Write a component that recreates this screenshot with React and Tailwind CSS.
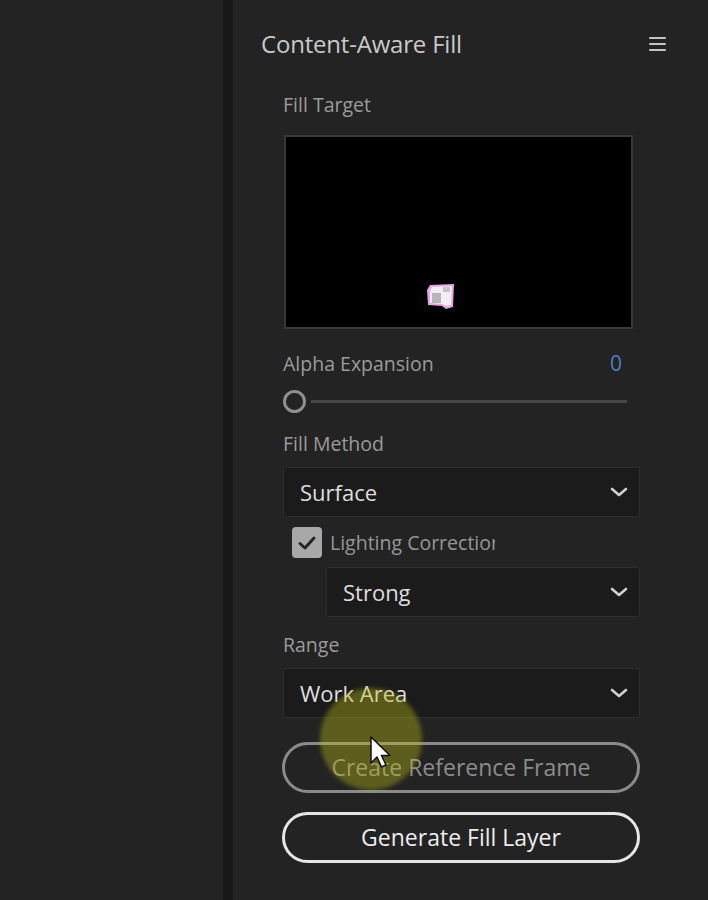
import React from "react";

const font = { fontFamily: '"Open Sans", "Noto Sans", sans-serif' };

function Chevron() {
  return (
    <svg width="18" height="12" viewBox="0 0 18 12" className="shrink-0">
      <path d="M2 3 L9 9 L16 3" fill="none" stroke="#d0d0d0" strokeWidth="2.6" strokeLinecap="round" strokeLinejoin="round" />
    </svg>
  );
}

function Dropdown({ label, className = "" }) {
  return (
    <div className={"h-[50px] flex items-center justify-between pl-[16px] pr-[11px] bg-[#1b1b1b] border border-[#2e2e2e] rounded-[2px] " + className}>
      <span className="text-[22px] text-[#dedede] leading-none">{label}</span>
      <Chevron />
    </div>
  );
}

export default function App() {
  return (
    <div className="flex h-[900px] w-[708px] overflow-hidden bg-[#232323]" style={font}>
      <div className="w-[223px] bg-[#222222]" />
      <div className="w-[10px] bg-[#171717]" />
      <div className="flex-1 relative bg-[#232323]">
        <div className="flex items-center justify-between pl-[28px] pr-[42px] mt-[30px] h-[28px]">
          <span className="text-[24px] text-[#c9c9c9] tracking-[-0.2px]">Content-Aware Fill</span>
          <div className="flex flex-col gap-[3.5px]">
            <div className="w-[17px] h-[2.5px] bg-[#c4c4c4] rounded-sm" />
            <div className="w-[17px] h-[2.5px] bg-[#c4c4c4] rounded-sm" />
            <div className="w-[17px] h-[2.5px] bg-[#c4c4c4] rounded-sm" />
          </div>
        </div>

        <div className="flex flex-col pl-[50px] w-[407px]">
          <div className="mt-[35px] h-[24px] leading-[24px] text-[19.5px] text-[#9b9b9b]">Fill Target</div>
          <div className="mt-[18px] ml-[1px] w-[349px] h-[194px] bg-black border-2 border-[#383838] flex items-end justify-center">
            <svg width="34" height="32" viewBox="0 0 34 32" className="mb-[15px] ml-[-36px]">
              <polygon points="6,5 30,4 29,27 22,29 18,26 4,25 3,10" fill="#e4a7e6" />
              <polygon points="8,7 28,6 27,25 22,26 18,24 6,23 6,11" fill="#f3eef3" />
              <rect x="8" y="13" width="9" height="10" fill="#b9b4b9" />
              <rect x="19" y="7" width="7" height="5" fill="#c6c1c6" />
            </svg>
          </div>

          <div className="mt-[23px] h-[24px] flex items-center justify-between pr-[18px]">
            <span className="text-[19.5px] text-[#9b9b9b]">Alpha Expansion</span>
            <span className="text-[21px] text-[#4a80c2]">0</span>
          </div>

          <div className="mt-[14px] h-[22px] flex items-center">
            <div className="w-[23px] h-[23px] rounded-full border-[3.5px] border-[#8f8f8f] shrink-0" />
            <div className="ml-[5px] h-[3px] w-[316px] bg-[#474747]" />
          </div>

          <div className="mt-[20px] h-[24px] leading-[24px] text-[19.5px] text-[#9b9b9b]">Fill Method</div>
          <Dropdown label="Surface" className="mt-[11px]" />

          <div className="mt-[10px] h-[31px] flex items-center pl-[9px]">
            <div className="w-[30px] h-[31px] rounded-[4px] bg-[#a8a8a8] flex items-center justify-center shrink-0">
              <svg width="20" height="16" viewBox="0 0 20 16">
                <path d="M3 8.5 L8 13 L17 3" fill="none" stroke="#262626" strokeWidth="3" strokeLinecap="round" strokeLinejoin="round" />
              </svg>
            </div>
            <div className="ml-[8px] w-[165px] overflow-hidden whitespace-nowrap text-[19.5px] text-[#979797]">Lighting Correction</div>
          </div>

          <Dropdown label="Strong" className="mt-[9px] ml-[43px]" />

          <div className="mt-[16px] h-[24px] leading-[24px] text-[19.5px] text-[#9b9b9b]">Range</div>
          <Dropdown label="Work Area" className="mt-[11px]" />

          <div className="mt-[24px] h-[51px] rounded-full border-[3px] border-[#8a8a8a] flex items-center justify-center text-[23px] text-[#8c8c8c] ml-[-1px]">
            Create Reference Frame
          </div>
          <div className="mt-[19px] h-[51px] rounded-full border-[3px] border-[#e6e6e6] flex items-center justify-center text-[23px] text-[#ececec] ml-[-1px]">
            Generate Fill Layer
          </div>
        </div>

        <div className="absolute left-[87px] top-[688px] w-[102px] h-[102px] rounded-full bg-[rgba(190,190,20,0.38)] blur-[2px] pointer-events-none" />
        <svg className="absolute left-[136px] top-[735px] pointer-events-none" width="26" height="36" viewBox="0 0 26 36">
          <path d="M2 2 L2 28 L8 22 L12.5 32 L17 30 L12.5 20.5 L21 20.5 Z" fill="#ffffff" stroke="#111" strokeWidth="1.5" strokeLinejoin="round" />
        </svg>
      </div>
    </div>
  );
}
